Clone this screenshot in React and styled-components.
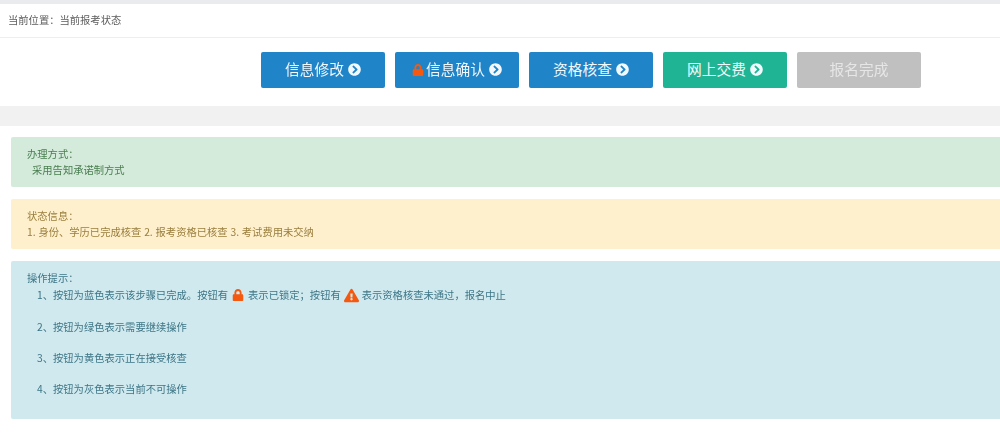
import React from 'react';
import styled, { createGlobalStyle } from 'styled-components';
import { FaChevronCircleRight, FaExclamationTriangle, FaLock } from 'react-icons/fa';

const GlobalStyle = createGlobalStyle`
  html, body {
    margin: 0;
    padding: 0;
    background: #fff;
    overflow: hidden;
  }
  body {
    font-family: "Noto Sans CJK SC", "Open Sans", sans-serif;
  }
`;

const Page = styled.div`
  width: 1000px;
  height: 434px;
  overflow: hidden;
  border-top: 4px solid #e9ebee;
  box-sizing: border-box;
  filter: blur(0.45px);
`;

const Breadcrumb = styled.div`
  height: 33px;
  line-height: 31px;
  padding-left: 8px;
  font-size: 10.3px;
  color: #5c5c5c;
  border-bottom: 1px solid #eeeeee;
`;

const Steps = styled.div`
  display: flex;
  gap: 10px;
  height: 68px;
  padding: 14px 0 0 261px;
  box-sizing: border-box;
`;

const colors = {
  blue: '#1f84c8',
  green: '#1fb594',
  gray: '#c0c0c0',
};

const StepButton = styled.div`
  width: 124px;
  height: 36px;
  padding-bottom: 3px;
  box-sizing: border-box;
  border-radius: 2px;
  display: flex;
  align-items: center;
  justify-content: center;
  gap: 4px;
  font-size: 14.7px;
  color: ${(p) => (p.$color === 'gray' ? '#e6e6e6' : '#f2f8fc')};
  background: ${(p) => colors[p.$color]};
  svg {
    flex: none;
    margin-top: 2px;
  }
`;

const Band = styled.div`
  height: 20px;
  background: #f1f1f1;
`;

const Alerts = styled.div`
  display: flex;
  flex-direction: column;
  gap: 12px;
  margin: 11px -12px 0 11px;
`;

const tones = {
  success: { bg: '#d4ebdb', fg: '#4a7d50' },
  warning: { bg: '#fef0cd', fg: '#9a7d3c' },
  info: { bg: '#d0e9ef', fg: '#3d7585' },
};

const Alert = styled.div`
  padding: 9px 16px;
  border-radius: 2px;
  font-size: 10.3px;
  line-height: 16px;
  word-spacing: 0.5px;
  color: ${(p) => tones[p.$tone].fg};
  background: ${(p) => tones[p.$tone].bg};
`;

const Indented = styled.div`
  padding-left: 5px;
`;

const Tips = styled.div`
  display: flex;
  flex-direction: column;
  gap: 15px;
  margin-top: 1px;
  padding-bottom: 13px;
`;

const Tip = styled.div`
  display: flex;
  align-items: center;
  gap: 3px;
  padding-left: 10px;
  height: 16px;
  &:first-child {
    margin-bottom: 1px;
  }
`;

const TipIcon = styled.span`
  display: inline-flex;
  margin: 0 ${(p) => p.$space}px;
  color: #f4590f;
  font-size: ${(p) => p.$size}px;
`;

function Arrow() {
  return <FaChevronCircleRight size={13} />;
}

export default function App() {
  return (
    <Page>
      <GlobalStyle />
      <Breadcrumb>当前位置：当前报考状态</Breadcrumb>
      <Steps>
        <StepButton $color="blue">信息修改<Arrow /></StepButton>
        <StepButton $color="blue">
          <FaLock size={12} color="#f4590f" style={{ marginRight: -2 }} />
          信息确认<Arrow />
        </StepButton>
        <StepButton $color="blue">资格核查<Arrow /></StepButton>
        <StepButton $color="green">网上交费<Arrow /></StepButton>
        <StepButton $color="gray">报名完成</StepButton>
      </Steps>
      <Band />
      <Alerts>
        <Alert $tone="success">
          <div>办理方式：</div>
          <Indented>采用告知承诺制方式</Indented>
        </Alert>
        <Alert $tone="warning">
          <div>状态信息：</div>
          <div>1. 身份、学历已完成核查 2. 报考资格已核查 3. 考试费用未交纳</div>
        </Alert>
        <Alert $tone="info">
          <div>操作提示：</div>
          <Tips>
            <Tip>
              1、按钮为蓝色表示该步骤已完成。按钮有
              <TipIcon $size={12} $space={1}><FaLock /></TipIcon>
              表示已锁定；按钮有
              <TipIcon $size={15} $space={0}><FaExclamationTriangle /></TipIcon>
              表示资格核查未通过，报名中止
            </Tip>
            <Tip>2、按钮为绿色表示需要继续操作</Tip>
            <Tip>3、按钮为黄色表示正在接受核查</Tip>
            <Tip>4、按钮为灰色表示当前不可操作</Tip>
          </Tips>
        </Alert>
      </Alerts>
    </Page>
  );
}
